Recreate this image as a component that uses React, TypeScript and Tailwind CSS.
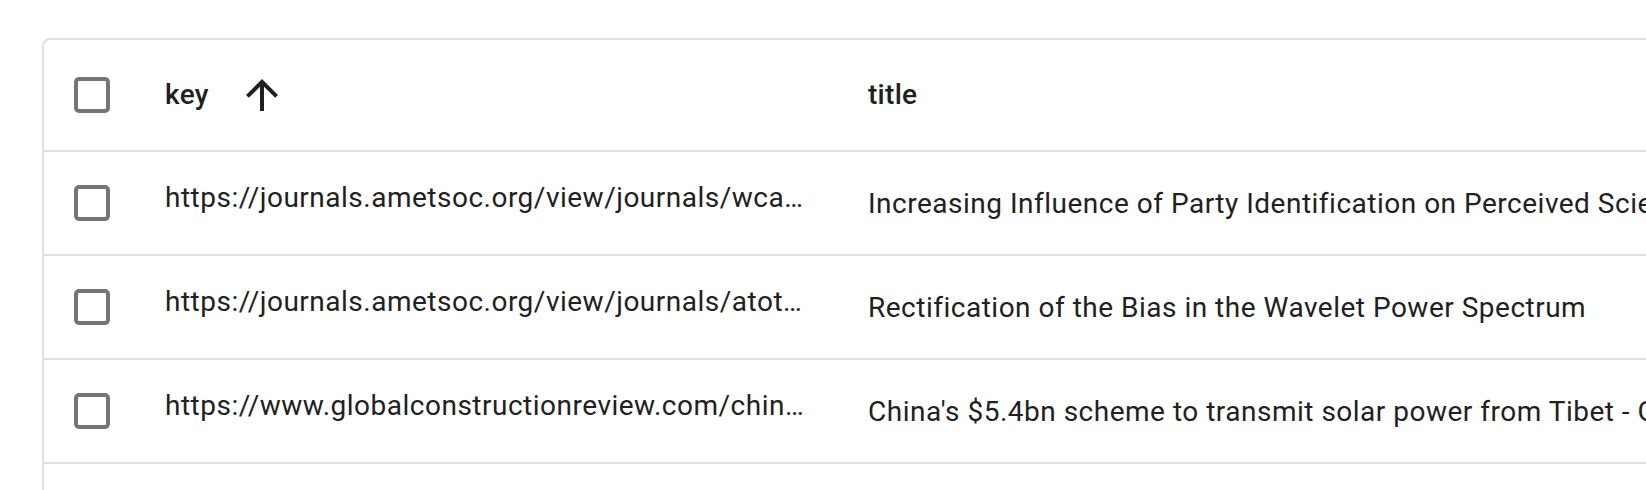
import React from "react";

const rows = [
  {
    key: "https://journals.ametsoc.org/view/journals/wcas/14/2/WCAS-D-21-0135.1.xml",
    title:
      "Increasing Influence of Party Identification on Perceived Scientific Agreement and Support for Government Action on Climate Change",
  },
  {
    key: "https://journals.ametsoc.org/view/journals/atot/24/12/2007jtecho511_1.xml",
    title: "Rectification of the Bias in the Wavelet Power Spectrum",
  },
  {
    key: "https://www.globalconstructionreview.com/chinas-54bn-scheme-transmit-solar-power-tibet/",
    title: "China's $5.4bn scheme to transmit solar power from Tibet - Global Construction Review",
  },
  { key: "", title: "" },
];

function Box() {
  return <div className="w-[36px] h-[36px] border-[4px] border-[#757575] rounded-[5px] shrink-0" />;
}

function ArrowUp() {
  return (
    <svg width="48" height="48" viewBox="0 0 24 24" className="shrink-0" fill="#212121">
      <path d="M4 12l1.41 1.41L11 7.83V20h2V7.83l5.58 5.59L20 12l-8-8-8 8z" />
    </svg>
  );
}

export default function App() {
  return (
    <div
      className="w-full h-[490px] overflow-hidden bg-white pt-[38px] pl-[42px] text-[#212121]"
      style={{ fontFamily: "Roboto, 'Liberation Sans', sans-serif" }}
    >
      <div className="w-[2000px] border-2 border-[#e0e0e0] rounded-[8px]">
        <div className="flex h-[112px] border-b-2 border-[#e0e0e0] items-center">
          <div className="w-[100px] shrink-0 flex items-center pl-[30px]">
            <Box />
          </div>
          <div className="w-[704px] shrink-0 flex items-center pl-[21px]">
            <span className="text-[28px] font-medium tracking-[0.3px]">key</span>
            <span className="ml-[29px] flex">
              <ArrowUp />
            </span>
          </div>
          <div className="flex-1 pl-[20px] text-[28px] font-medium tracking-[0.3px]">title</div>
        </div>
        {rows.map((r, i) => (
          <div key={i} className="flex h-[104px] border-b-2 border-[#e0e0e0] items-center">
            <div className="w-[100px] shrink-0 flex items-center pl-[30px]">{r.key && <Box />}</div>
            <div className="w-[704px] shrink-0 pl-[21px] pr-[38px] pb-[10px] text-[28px] tracking-[0.5px] whitespace-nowrap overflow-hidden text-ellipsis">
              {r.key}
            </div>
            <div className="flex-1 pl-[20px] pt-[1px] text-[28px] tracking-[0.5px] whitespace-nowrap overflow-hidden">
              {r.title}
            </div>
          </div>
        ))}
      </div>
    </div>
  );
}
